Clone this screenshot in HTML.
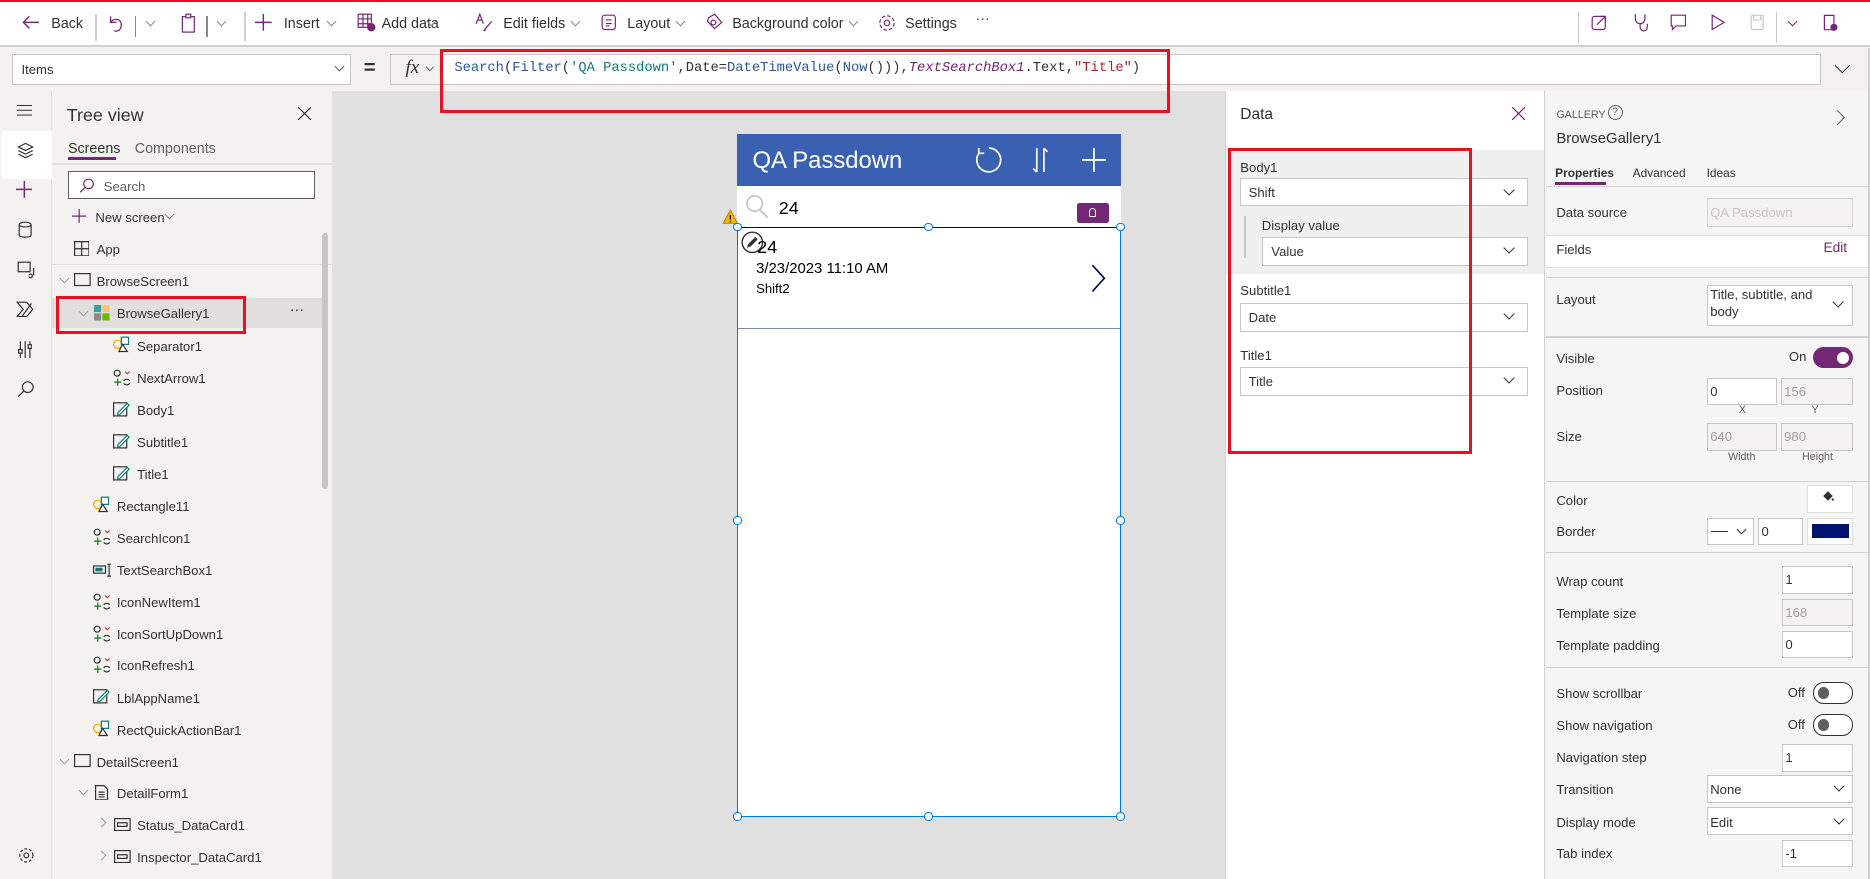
<!DOCTYPE html>
<html><head><meta charset="utf-8"><style>
html,body{margin:0;padding:0;width:1870px;height:879px;overflow:hidden;background:#fff}
#w{zoom:1.19260;width:1568px;height:737px;position:relative;font-family:"Liberation Sans",sans-serif;color:#323130;font-size:11px;overflow:hidden}
.a{position:absolute}
.t{position:absolute;white-space:nowrap}
.box{position:absolute;background:#fff;border:1px solid #c8c6c4;box-sizing:border-box}
.dis{background:#f3f2f1;color:#a19f9d}
.chev{position:absolute;width:6px;height:6px;border-right:1px solid #323130;border-bottom:1px solid #323130;transform:rotate(45deg)}
.tb{position:absolute;top:13px;font-size:12px;color:#323130}
.tc{position:absolute;top:15px;width:5px;height:5px;border-right:1px solid #8a8886;border-bottom:1px solid #8a8886;transform:rotate(45deg)}
.ti{position:absolute;font-size:11px;color:#323130;white-space:nowrap}
.h{position:absolute;width:7px;height:7px;border:1px solid #0078d4;border-radius:50%;background:#fff;box-sizing:border-box}
.lbl{position:absolute;font-size:11px;color:#323130;white-space:nowrap}
.red{position:absolute;border:3px solid #e81123;box-sizing:border-box}
</style></head><body><div id="w">
<div class="a" style="left:0;top:0;width:1568px;height:2px;background:#e81123"></div>
<div class="a" style="left:0;top:38px;width:1568px;height:1px;background:#d2d0ce"></div>
<svg class="a" style="left:18px;top:12px" width="16" height="14"><path d="M15 7H2M7 2L2 7l5 5" stroke="#742774" fill="none" stroke-width="1.2"/></svg>
<div class="tb" style="left:43px">Back</div>
<div class="a" style="left:80px;top:12px;width:1px;height:22px;background:#d2d0ce"></div>
<svg class="a" style="left:90px;top:12px" width="14" height="16"><path d="M3 2v5h5M3 7c3-4 9-3 9 2s-4 6-6 5" stroke="#742774" fill="none" stroke-width="1.1"/></svg>
<div class="a" style="left:113px;top:13px;width:1px;height:18px;background:#8a8886"></div>
<div class="tc" style="left:123px"></div>
<svg class="a" style="left:151px;top:11px" width="14" height="18"><rect x="2" y="3" width="10" height="13" stroke="#742774" fill="none"/><rect x="5" y="1" width="4" height="3" stroke="#742774" fill="#fff"/></svg>
<div class="a" style="left:173px;top:13px;width:1px;height:18px;background:#8a8886"></div>
<div class="tc" style="left:183px"></div>
<div class="a" style="left:205px;top:10px;width:1px;height:24px;background:#d2d0ce"></div>
<svg class="a" style="left:214px;top:12px" width="14" height="14"><path d="M7 0v14M0 7h14" stroke="#742774" stroke-width="1.2"/></svg>
<div class="tb" style="left:238px">Insert</div><div class="tc" style="left:275px"></div>
<svg class="a" style="left:299px;top:11px" width="16" height="16"><rect x="1" y="1" width="11" height="11" stroke="#742774" fill="none"/><path d="M1 5h11M1 9h11M5 1v11M9 1v11" stroke="#742774"/><circle cx="12" cy="12" r="3.5" fill="#742774"/></svg>
<div class="tb" style="left:320px">Add data</div><div class="tc" style="left:359px"></div>
<svg class="a" style="left:398px;top:11px" width="16" height="16"><path d="M1 9L4 1l3 8M2 6h4M8 14l6-7M7 15l2-1" stroke="#742774" fill="none"/></svg>
<div class="tb" style="left:422px">Edit fields</div><div class="tc" style="left:480px"></div>
<svg class="a" style="left:504px;top:12px" width="14" height="14"><rect x="1" y="1" width="11" height="12" rx="2" stroke="#742774" fill="none"/><path d="M4 5h5M4 8h5M4 10h3" stroke="#742774"/></svg>
<div class="tb" style="left:526px">Layout</div><div class="tc" style="left:568px"></div>
<svg class="a" style="left:591px;top:11px" width="16" height="16"><path d="M3 4l5-3 6 7-6 5-6-6z" stroke="#742774" fill="none"/><circle cx="7" cy="8" r="2" stroke="#742774" fill="none"/></svg>
<div class="tb" style="left:614px">Background color</div><div class="tc" style="left:713px"></div>
<svg class="a" style="left:736px;top:12px" width="15" height="15"><circle cx="7.5" cy="7.5" r="2.3" stroke="#742774" fill="none"/><circle cx="7.5" cy="7.5" r="6" stroke="#742774" fill="none" stroke-dasharray="3 1.7"/></svg>
<div class="tb" style="left:759px">Settings</div>
<div class="tb" style="left:818px;top:9px;color:#742774">···</div>
<div class="a" style="left:1323px;top:10px;width:1px;height:26px;background:#c8c6c4"></div>
<svg class="a" style="left:1334px;top:12px" width="14" height="14"><rect x="1" y="2" width="11" height="11" rx="2" stroke="#742774" fill="none"/><path d="M5 9l7-7M8 2h4v4" stroke="#742774" fill="none"/></svg>
<svg class="a" style="left:1369px;top:11px" width="14" height="16"><path d="M2 1v4a4 4 0 008 0V1M6 9v3a3 3 0 006 0V9" stroke="#742774" fill="none"/></svg>
<svg class="a" style="left:1400px;top:12px" width="14" height="15"><path d="M1 1h12v9H5l-3 3v-3H1z" stroke="#742774" fill="none"/></svg>
<svg class="a" style="left:1435px;top:12px" width="12" height="14"><path d="M1 1l10 6-10 6z" stroke="#742774" fill="none"/></svg>
<svg class="a" style="left:1467px;top:12px" width="12" height="14"><rect x="1" y="1" width="10" height="12" rx="1" stroke="#c8c6c4" fill="none"/><path d="M3 1v4h6V1" stroke="#c8c6c4" fill="none"/></svg>
<div class="a" style="left:1489px;top:10px;width:1px;height:26px;background:#c8c6c4"></div>
<div class="tc" style="left:1500px;border-color:#742774"></div>
<svg class="a" style="left:1528px;top:11px" width="14" height="16"><path d="M2 2h8v12H2z" stroke="#742774" fill="none"/><circle cx="10" cy="12" r="3" fill="#742774"/></svg>
<div class="a" style="left:0;top:39px;width:1568px;height:37px;background:#f3f2f1"></div>
<div class="box" style="left:10px;top:45px;width:284px;height:26px"></div>
<div class="t" style="left:18px;top:52px;font-size:11px">Items</div>
<div class="chev" style="left:282px;top:53px;width:5px;height:5px;border-color:#605e5c"></div>
<div class="t" style="left:305px;top:48px;font-size:17px;font-weight:bold">=</div>
<div class="box" style="left:327px;top:45px;width:44px;height:26px;background:#f3f2f1"></div>
<div class="t" style="left:340px;top:48px;font-size:16px;font-family:'Liberation Serif',serif;font-style:italic">fx</div>
<div class="chev" style="left:358px;top:54px;width:4px;height:4px;border-color:#605e5c"></div>
<div class="box" style="left:371px;top:45px;width:1156px;height:26px"></div>
<div class="t" style="left:381px;top:51px;font-family:'Liberation Mono',monospace;font-size:11.55px;color:#323130"><span style="color:#2b579a">Search</span>(<span style="color:#2b579a">Filter</span>(<span style="color:#0b7a75">'QA Passdown'</span>,Date=<span style="color:#2b579a">DateTimeValue</span>(<span style="color:#2b579a">Now</span>())),<i style="color:#742774">TextSearchBox1</i>.Text,<span style="color:#a4262c">"Title"</span>)</div>
<div class="chev" style="left:1540px;top:50px;width:8px;height:8px"></div>
<div class="a" style="left:0;top:76px;width:43px;height:661px;background:#f3f2f1;border-right:1px solid #e1dfdd"></div>
<div class="a" style="left:14px;top:88px;width:13px;height:1px;background:#323130;box-shadow:0 4px 0 #323130,0 8px 0 #323130"></div>
<div class="a" style="left:1px;top:110px;width:47px;height:40px;background:#fff;border-radius:3px"></div>
<svg class="a" style="left:13px;top:118px" width="16" height="16"><path d="M8 2l6 3-6 3-6-3zM2 8l6 3 6-3M2 11l6 3 6-3" stroke="#323130" fill="none"/></svg>
<svg class="a" style="left:13px;top:152px" width="14" height="14"><path d="M7 0v14M0 7h14" stroke="#742774" stroke-width="1.2"/></svg>
<svg class="a" style="left:15px;top:185px" width="12" height="15"><ellipse cx="6" cy="3" rx="5" ry="2" stroke="#323130" fill="none"/><path d="M1 3v9c0 2 10 2 10 0V3" stroke="#323130" fill="none"/></svg>
<svg class="a" style="left:14px;top:219px" width="16" height="15"><rect x="1" y="1" width="10" height="8" stroke="#323130" fill="none"/><path d="M10 13a1.5 1.5 0 100-1M14 12V6" stroke="#323130" fill="none"/></svg>
<svg class="a" style="left:13px;top:252px" width="17" height="14"><path d="M1 1h8l5 6-5 6H1l5-6zM5 13l8-11" stroke="#323130" fill="none"/></svg>
<svg class="a" style="left:15px;top:285px" width="12" height="16"><path d="M2 1v14M6 1v14M10 1v14" stroke="#323130"/><rect x="0.5" y="8" width="3" height="3" fill="#f3f2f1" stroke="#323130"/><rect x="8.5" y="4" width="3" height="3" fill="#f3f2f1" stroke="#323130"/></svg>
<svg class="a" style="left:14px;top:319px" width="15" height="15"><circle cx="9" cy="6" r="4.5" stroke="#323130" fill="none"/><path d="M6 9l-5 5" stroke="#323130"/></svg>
<svg class="a" style="left:15px;top:710px" width="14" height="14"><circle cx="7" cy="7" r="2" stroke="#323130" fill="none"/><circle cx="7" cy="7" r="5.5" stroke="#323130" fill="none" stroke-dasharray="2.5 1.5"/></svg>
<div class="a" style="left:44px;top:76px;width:234px;height:661px;background:#f3f2f1"></div>
<div class="t" style="left:56px;top:88px;font-size:15px">Tree view</div>
<svg class="a" style="left:250px;top:90px" width="11" height="11"><path d="M0 0l11 11M11 0L0 11" stroke="#323130"/></svg>
<div class="t" style="left:57px;top:118px;font-size:12px;color:#323130">Screens</div>
<div class="a" style="left:57px;top:132px;width:40px;height:2px;background:#742774"></div>
<div class="t" style="left:113px;top:118px;font-size:12px;color:#605e5c">Components</div>
<div class="a" style="left:44px;top:137px;width:234px;height:1px;background:#e1dfdd"></div>
<div class="box" style="left:57px;top:143px;width:207px;height:24px;border-color:#605e5c"></div>
<svg class="a" style="left:66px;top:149px" width="13" height="13"><circle cx="8" cy="5" r="4" stroke="#742774" fill="none"/><path d="M5 8l-4 4" stroke="#742774"/></svg>
<div class="t" style="left:87px;top:150px;font-size:11px;color:#605e5c">Search</div>
<svg class="a" style="left:60px;top:175px" width="12" height="12"><path d="M6 0v12M0 6h12" stroke="#742774"/></svg>
<div class="t" style="left:80px;top:176px;font-size:11px">New screen</div>
<div class="tc" style="left:139px;top:177px"></div>
<div class="a" style="left:44px;top:221px;width:234px;height:1px;background:#e1dfdd"></div>
<div class="a" style="left:270px;top:195px;width:5px;height:215px;background:#c8c6c4;border-radius:3px"></div>
<div class="a" style="left:44px;top:250px;width:226px;height:25px;background:#e1dfdd"></div>
<svg class="a" style="left:62px;top:202px" width="13" height="13"><path d="M.5 .5h12v12H.5zM6.5 .5v12M.5 6.5h12" stroke="#323130" fill="none"/></svg>
<div class="ti" style="left:81px;top:203px">App</div>
<div class="tc" style="left:51px;top:231px;border-color:#a19f9d"></div>
<svg class="a" style="left:62px;top:229px" width="14" height="12"><rect x=".5" y=".5" width="13" height="10" stroke="#323130" fill="none"/></svg>
<div class="ti" style="left:81px;top:230px">BrowseScreen1</div>
<div class="tc" style="left:67px;top:258px;border-color:#a19f9d"></div>
<svg class="a" style="left:79px;top:256px" width="13" height="13"><rect x="0" y="0" width="6" height="6" fill="#3aa0a0"/><rect x="7" y="0" width="6" height="6" fill="#f8c471"/><rect x="0" y="7" width="6" height="6" fill="#8a8886"/><rect x="7" y="7" width="6" height="6" fill="#6bb700"/></svg>
<div class="ti" style="left:98px;top:257px">BrowseGallery1</div>
<div class="t" style="left:243px;top:253px;font-size:12px">···</div>
<div class="red" style="left:47px;top:248px;width:159px;height:32px"></div>
<div class="ti" style="left:115px;top:284px">Separator1</div>
<div class="ti" style="left:115px;top:311px">NextArrow1</div>
<div class="ti" style="left:115px;top:338px">Body1</div>
<div class="ti" style="left:115px;top:365px">Subtitle1</div>
<div class="ti" style="left:115px;top:392px">Title1</div>
<div class="ti" style="left:98px;top:418px">Rectangle11</div>
<div class="ti" style="left:98px;top:445px">SearchIcon1</div>
<div class="ti" style="left:98px;top:472px">TextSearchBox1</div>
<div class="ti" style="left:98px;top:499px">IconNewItem1</div>
<div class="ti" style="left:98px;top:526px">IconSortUpDown1</div>
<div class="ti" style="left:98px;top:552px">IconRefresh1</div>
<div class="ti" style="left:98px;top:579px">LblAppName1</div>
<div class="ti" style="left:98px;top:606px">RectQuickActionBar1</div>
<div class="tc" style="left:51px;top:634px;border-color:#a19f9d"></div>
<svg class="a" style="left:62px;top:632px" width="14" height="12"><rect x=".5" y=".5" width="13" height="10" stroke="#323130" fill="none"/></svg>
<div class="ti" style="left:81px;top:633px">DetailScreen1</div>
<div class="tc" style="left:67px;top:660px;border-color:#a19f9d"></div>
<svg class="a" style="left:80px;top:658px" width="11" height="13"><path d="M.5 .5h7l3 3v9H.5zM3 6h5M3 8h5M3 10h5" stroke="#323130" fill="none"/></svg>
<div class="ti" style="left:98px;top:659px">DetailForm1</div>
<div class="a" style="left:82px;top:687px;width:5px;height:5px;border-right:1px solid #a19f9d;border-top:1px solid #a19f9d;transform:rotate(45deg)"></div>
<svg class="a" style="left:96px;top:686px" width="14" height="11"><rect x=".5" y=".5" width="13" height="10" stroke="#323130" fill="none"/><rect x="3" y="4" width="8" height="3" stroke="#323130" fill="none"/></svg>
<div class="ti" style="left:115px;top:686px">Status_DataCard1</div>
<div class="a" style="left:82px;top:714px;width:5px;height:5px;border-right:1px solid #a19f9d;border-top:1px solid #a19f9d;transform:rotate(45deg)"></div>
<svg class="a" style="left:96px;top:713px" width="14" height="11"><rect x=".5" y=".5" width="13" height="10" stroke="#323130" fill="none"/><rect x="3" y="4" width="8" height="3" stroke="#323130" fill="none"/></svg>
<div class="ti" style="left:115px;top:713px">Inspector_DataCard1</div>
<svg class="a" style="left:95px;top:282px" width="15" height="14"><circle cx="4" cy="7" r="3.5" stroke="#f2a900" fill="none"/><rect x="7" y="1" width="6" height="6" stroke="#0b7a75" fill="#fff"/><path d="M5 13l3-6 4 6z" stroke="#323130" fill="#fff"/></svg>
<svg class="a" style="left:78px;top:416px" width="15" height="14"><circle cx="4" cy="7" r="3.5" stroke="#f2a900" fill="none"/><rect x="7" y="1" width="6" height="6" stroke="#0b7a75" fill="#fff"/><path d="M5 13l3-6 4 6z" stroke="#323130" fill="#fff"/></svg>
<svg class="a" style="left:78px;top:604px" width="15" height="14"><circle cx="4" cy="7" r="3.5" stroke="#f2a900" fill="none"/><rect x="7" y="1" width="6" height="6" stroke="#0b7a75" fill="#fff"/><path d="M5 13l3-6 4 6z" stroke="#323130" fill="#fff"/></svg>
<svg class="a" style="left:95px;top:309px" width="15" height="15"><circle cx="3.5" cy="3.5" r="2.5" stroke="#323130" fill="none"/><path d="M10 2l2 2 2-2" stroke="#d13438" fill="none"/><path d="M1 11h6M4 8v6" stroke="#107c10"/><path d="M9 10a3 3 0 015 0M14 12a3 3 0 01-5 0" stroke="#323130" fill="none"/></svg>
<svg class="a" style="left:78px;top:443px" width="15" height="15"><circle cx="3.5" cy="3.5" r="2.5" stroke="#323130" fill="none"/><path d="M10 2l2 2 2-2" stroke="#d13438" fill="none"/><path d="M1 11h6M4 8v6" stroke="#107c10"/><path d="M9 10a3 3 0 015 0M14 12a3 3 0 01-5 0" stroke="#323130" fill="none"/></svg>
<svg class="a" style="left:78px;top:497px" width="15" height="15"><circle cx="3.5" cy="3.5" r="2.5" stroke="#323130" fill="none"/><path d="M10 2l2 2 2-2" stroke="#d13438" fill="none"/><path d="M1 11h6M4 8v6" stroke="#107c10"/><path d="M9 10a3 3 0 015 0M14 12a3 3 0 01-5 0" stroke="#323130" fill="none"/></svg>
<svg class="a" style="left:78px;top:524px" width="15" height="15"><circle cx="3.5" cy="3.5" r="2.5" stroke="#323130" fill="none"/><path d="M10 2l2 2 2-2" stroke="#d13438" fill="none"/><path d="M1 11h6M4 8v6" stroke="#107c10"/><path d="M9 10a3 3 0 015 0M14 12a3 3 0 01-5 0" stroke="#323130" fill="none"/></svg>
<svg class="a" style="left:78px;top:550px" width="15" height="15"><circle cx="3.5" cy="3.5" r="2.5" stroke="#323130" fill="none"/><path d="M10 2l2 2 2-2" stroke="#d13438" fill="none"/><path d="M1 11h6M4 8v6" stroke="#107c10"/><path d="M9 10a3 3 0 015 0M14 12a3 3 0 01-5 0" stroke="#323130" fill="none"/></svg>
<svg class="a" style="left:78px;top:472px" width="16" height="12"><rect x=".5" y="2.5" width="10" height="6" stroke="#323130" fill="none"/><rect x="2" y="4" width="6" height="3" fill="#0b7a75"/><path d="M12 1h3M13.5 1v10M12 11h3" stroke="#323130"/></svg>
<svg class="a" style="left:95px;top:336px" width="14" height="14"><rect x=".5" y="1.5" width="11" height="11" stroke="#323130" fill="none"/><path d="M4 10l8-8 1.5 1.5-8 8H4z" stroke="#0b7a75" fill="#fff"/></svg>
<svg class="a" style="left:95px;top:363px" width="14" height="14"><rect x=".5" y="1.5" width="11" height="11" stroke="#323130" fill="none"/><path d="M4 10l8-8 1.5 1.5-8 8H4z" stroke="#0b7a75" fill="#fff"/></svg>
<svg class="a" style="left:95px;top:390px" width="14" height="14"><rect x=".5" y="1.5" width="11" height="11" stroke="#323130" fill="none"/><path d="M4 10l8-8 1.5 1.5-8 8H4z" stroke="#0b7a75" fill="#fff"/></svg>
<svg class="a" style="left:78px;top:577px" width="14" height="14"><rect x=".5" y="1.5" width="11" height="11" stroke="#323130" fill="none"/><path d="M4 10l8-8 1.5 1.5-8 8H4z" stroke="#0b7a75" fill="#fff"/></svg>
<div class="a" style="left:278px;top:76px;width:749px;height:661px;background:#e0e0e0"></div>
<div class="a" style="left:618px;top:112px;width:322px;height:44px;background:#3a60b1"></div>
<div class="t" style="left:631px;top:123px;font-size:20px;color:#fff">QA Passdown</div>
<svg class="a" style="left:817px;top:122px" width="25" height="25"><path d="M12.5 2.5A10 10 0 1 1 4 7M4 2.5V7h4.5" stroke="#fff" fill="none" stroke-width="1.4"/></svg>
<svg class="a" style="left:865px;top:123px" width="14" height="22"><path d="M4 1v20M1 18l3 3M10 21V1M13 4l-3-3" stroke="#fff" fill="none" stroke-width="1.4"/></svg>
<svg class="a" style="left:907px;top:124px" width="20" height="20"><path d="M10 0v20M0 10h20" stroke="#fff" stroke-width="1.5"/></svg>
<div class="a" style="left:618px;top:156px;width:322px;height:34px;background:#fff"></div>
<svg class="a" style="left:624px;top:163px" width="22" height="22"><circle cx="9" cy="8" r="6.5" stroke="#c8c6c4" fill="none" stroke-width="1.5"/><path d="M13 13l7 7" stroke="#c8c6c4" stroke-width="1.5"/></svg>
<div class="t" style="left:653px;top:166px;font-size:15px;color:#000">24</div>
<div class="a" style="left:903px;top:170px;width:27px;height:17px;background:#742774;border-radius:2px"></div>
<div class="a" style="left:913px;top:174px;width:6px;height:8px;border:1px solid #fff;border-radius:3px 3px 1px 1px;box-sizing:border-box"></div>
<div class="a" style="left:618px;top:190px;width:322px;height:495px;background:#fff;border:1px solid #0078d4;box-sizing:border-box"></div>
<div class="a" style="left:619px;top:190px;width:320px;height:1px;background:#000a3c"></div>
<svg class="a" style="left:605px;top:175px" width="14" height="13"><path d="M7 1l6 11H1z" fill="#f8b400" stroke="#c58a00"/><path d="M7 5v4M7 10v1" stroke="#000"/></svg>
<svg class="a" style="left:621px;top:194px" width="19" height="19"><circle cx="9.5" cy="9.5" r="8.5" stroke="#323130" fill="none" stroke-width="1.2"/><path d="M5 14l1-3 6-6 2 2-6 6z" fill="#323130"/></svg>
<div class="t" style="left:635px;top:199px;font-size:15px;color:#000">24</div>
<div class="t" style="left:634px;top:219px;font-size:12.5px;color:#000">3/23/2023 11:10 AM</div>
<div class="t" style="left:634px;top:236px;font-size:11px;color:#000">Shift2</div>
<svg class="a" style="left:914px;top:221px" width="14" height="24"><path d="M2 1l10 11-10 11" stroke="#000a5c" fill="none" stroke-width="1.4"/></svg>
<div class="a" style="left:619px;top:275px;width:320px;height:1px;background:#8089b0"></div>
<div class="h" style="left:615px;top:187px"></div><div class="h" style="left:775px;top:187px"></div><div class="h" style="left:936px;top:187px"></div>
<div class="h" style="left:615px;top:433px"></div><div class="h" style="left:936px;top:433px"></div>
<div class="h" style="left:615px;top:681px"></div><div class="h" style="left:775px;top:681px"></div><div class="h" style="left:936px;top:681px"></div>
<div class="red" style="left:369px;top:41px;width:612px;height:54px"></div>
<div class="a" style="left:1027px;top:76px;width:268px;height:661px;background:#fff;border-left:1px solid #d2d0ce"></div>
<div class="t" style="left:1040px;top:89px;font-size:13px">Data</div>
<svg class="a" style="left:1268px;top:90px" width="11" height="11"><path d="M0 0l11 11M11 0L0 11" stroke="#742774"/></svg>
<div class="a" style="left:1028px;top:126px;width:267px;height:104px;background:#f0f0f0"></div>
<div class="lbl" style="left:1040px;top:134px">Body1</div>
<div class="box" style="left:1040px;top:149px;width:241px;height:24px"></div>
<div class="lbl" style="left:1047px;top:155px">Shift</div>
<div class="chev" style="left:1262px;top:156px"></div>
<div class="a" style="left:1043px;top:181px;width:2px;height:35px;background:#c8c6c4"></div>
<div class="lbl" style="left:1058px;top:183px">Display value</div>
<div class="box" style="left:1058px;top:199px;width:223px;height:24px"></div>
<div class="lbl" style="left:1066px;top:205px">Value</div>
<div class="chev" style="left:1262px;top:205px"></div>
<div class="lbl" style="left:1040px;top:237px">Subtitle1</div>
<div class="box" style="left:1040px;top:254px;width:241px;height:24px"></div>
<div class="lbl" style="left:1047px;top:260px">Date</div>
<div class="chev" style="left:1262px;top:260px"></div>
<div class="lbl" style="left:1040px;top:292px">Title1</div>
<div class="box" style="left:1040px;top:308px;width:241px;height:24px"></div>
<div class="lbl" style="left:1047px;top:314px">Title</div>
<div class="chev" style="left:1262px;top:314px"></div>
<div class="red" style="left:1030px;top:124px;width:204px;height:257px"></div>
<div class="a" style="left:1295px;top:76px;width:272px;height:661px;background:#f5f5f5;border-left:1px solid #d2d0ce"></div>
<div class="a" style="left:1566px;top:40px;width:2px;height:697px;background:#d2d0ce"></div>
<div class="t" style="left:1305px;top:91px;font-size:9px;color:#605e5c">GALLERY</div>
<div class="a" style="left:1348px;top:88px;width:11px;height:11px;border:1px solid #605e5c;border-radius:50%;font-size:9px;text-align:center;line-height:11px;color:#605e5c">?</div>
<div class="a" style="left:1536px;top:94px;width:8px;height:8px;border-right:1px solid #605e5c;border-top:1px solid #605e5c;transform:rotate(45deg)"></div>
<div class="t" style="left:1305px;top:110px;font-size:12.5px">BrowseGallery1</div>
<div class="t" style="left:1304px;top:139px;font-size:10px;font-weight:bold">Properties</div>
<div class="a" style="left:1304px;top:153px;width:43px;height:2px;background:#742774"></div>
<div class="t" style="left:1369px;top:139px;font-size:10px">Advanced</div>
<div class="t" style="left:1431px;top:139px;font-size:10px">Ideas</div>
<div class="a" style="left:1296px;top:156px;width:270px;height:1px;background:#d2d0ce"></div>
<div class="lbl" style="left:1305px;top:172px">Data source</div>
<div class="box dis" style="left:1431px;top:166px;width:123px;height:24px;border-color:#d2d0ce"></div>
<div class="lbl" style="left:1434px;top:172px;color:#c8c6c4">QA Passdown</div>
<div class="a" style="left:1296px;top:197px;width:270px;height:26px;background:#fff;border-top:1px solid #e1dfdd;border-bottom:1px solid #e1dfdd"></div>
<div class="lbl" style="left:1305px;top:203px">Fields</div>
<div class="t" style="left:1529px;top:201px;font-size:11.5px;color:#742774">Edit</div>
<div class="a" style="left:1296px;top:232px;width:270px;height:1px;background:#d2d0ce"></div>
<div class="lbl" style="left:1305px;top:245px">Layout</div>
<div class="box" style="left:1431px;top:239px;width:123px;height:34px"></div>
<div class="lbl" style="left:1434px;top:241px;line-height:14px">Title, subtitle, and<br>body</div>
<div class="chev" style="left:1538px;top:250px"></div>
<div class="a" style="left:1296px;top:282px;width:270px;height:1px;background:#d2d0ce"></div>
<div class="lbl" style="left:1305px;top:294px">Visible</div>
<div class="lbl" style="left:1500px;top:293px">On</div>
<div class="a" style="left:1520px;top:291px;width:34px;height:18px;border-radius:9px;background:#742774"></div>
<div class="a" style="left:1540px;top:295px;width:10px;height:10px;border-radius:50%;background:#fff"></div>
<div class="lbl" style="left:1305px;top:321px">Position</div>
<div class="box" style="left:1431px;top:317px;width:59px;height:23px"></div><div class="lbl" style="left:1434px;top:322px">0</div>
<div class="box dis" style="left:1493px;top:317px;width:61px;height:23px"></div><div class="lbl" style="left:1496px;top:322px;color:#a19f9d">156</div>
<div class="t" style="left:1458px;top:339px;font-size:9px;color:#605e5c">X</div>
<div class="t" style="left:1519px;top:339px;font-size:9px;color:#605e5c">Y</div>
<div class="lbl" style="left:1305px;top:360px">Size</div>
<div class="box dis" style="left:1431px;top:355px;width:59px;height:23px"></div><div class="lbl" style="left:1434px;top:360px;color:#a19f9d">640</div>
<div class="box dis" style="left:1493px;top:355px;width:61px;height:23px"></div><div class="lbl" style="left:1496px;top:360px;color:#a19f9d">980</div>
<div class="t" style="left:1449px;top:378px;font-size:9px;color:#605e5c">Width</div>
<div class="t" style="left:1511px;top:378px;font-size:9px;color:#605e5c">Height</div>
<div class="a" style="left:1296px;top:403px;width:270px;height:1px;background:#d2d0ce"></div>
<div class="lbl" style="left:1305px;top:413px">Color</div>
<div class="box" style="left:1515px;top:407px;width:39px;height:23px;border-color:#e1dfdd"></div>
<svg class="a" style="left:1528px;top:411px" width="10" height="10"><path d="M1 5l4-4 4 4-4 4z" fill="#323130"/><circle cx="9" cy="8" r="1" fill="#323130"/></svg>
<div class="lbl" style="left:1305px;top:439px">Border</div>
<div class="box" style="left:1431px;top:434px;width:40px;height:23px"></div>
<div class="a" style="left:1435px;top:445px;width:14px;height:1px;background:#323130"></div>
<div class="chev" style="left:1457px;top:441px;width:5px;height:5px"></div>
<div class="box" style="left:1474px;top:434px;width:38px;height:23px"></div><div class="lbl" style="left:1477px;top:439px">0</div>
<div class="box" style="left:1515px;top:434px;width:39px;height:23px;border-color:#e1dfdd"></div>
<div class="a" style="left:1519px;top:439px;width:31px;height:12px;background:#00126b"></div>
<div class="a" style="left:1296px;top:463px;width:270px;height:1px;background:#d2d0ce"></div>
<div class="lbl" style="left:1305px;top:481px">Wrap count</div>
<div class="box" style="left:1494px;top:475px;width:60px;height:23px"></div><div class="lbl" style="left:1497px;top:480px">1</div>
<div class="lbl" style="left:1305px;top:508px">Template size</div>
<div class="box dis" style="left:1494px;top:502px;width:60px;height:23px"></div><div class="lbl" style="left:1497px;top:507px;color:#a19f9d">168</div>
<div class="lbl" style="left:1305px;top:535px">Template padding</div>
<div class="box" style="left:1494px;top:529px;width:60px;height:23px"></div><div class="lbl" style="left:1497px;top:534px">0</div>
<div class="a" style="left:1296px;top:559px;width:270px;height:1px;background:#d2d0ce"></div>
<div class="lbl" style="left:1305px;top:575px">Show scrollbar</div>
<div class="lbl" style="left:1499px;top:574px">Off</div>
<div class="a" style="left:1520px;top:572px;width:34px;height:18px;border-radius:9px;border:1px solid #323130;box-sizing:border-box;background:#fff"></div>
<div class="a" style="left:1524px;top:576px;width:10px;height:10px;border-radius:50%;background:#605e5c"></div>
<div class="lbl" style="left:1305px;top:602px">Show navigation</div>
<div class="lbl" style="left:1499px;top:601px">Off</div>
<div class="a" style="left:1520px;top:599px;width:34px;height:18px;border-radius:9px;border:1px solid #323130;box-sizing:border-box;background:#fff"></div>
<div class="a" style="left:1524px;top:603px;width:10px;height:10px;border-radius:50%;background:#605e5c"></div>
<div class="lbl" style="left:1305px;top:629px">Navigation step</div>
<div class="box" style="left:1494px;top:624px;width:60px;height:23px"></div><div class="lbl" style="left:1497px;top:629px">1</div>
<div class="lbl" style="left:1305px;top:656px">Transition</div>
<div class="box" style="left:1431px;top:650px;width:123px;height:23px"></div><div class="lbl" style="left:1434px;top:656px">None</div>
<div class="chev" style="left:1539px;top:656px"></div>
<div class="lbl" style="left:1305px;top:683px">Display mode</div>
<div class="box" style="left:1431px;top:677px;width:123px;height:23px"></div><div class="lbl" style="left:1434px;top:683px">Edit</div>
<div class="chev" style="left:1539px;top:683px"></div>
<div class="lbl" style="left:1305px;top:709px">Tab index</div>
<div class="box" style="left:1494px;top:704px;width:60px;height:23px"></div><div class="lbl" style="left:1497px;top:709px">-1</div>
</div></body></html>
